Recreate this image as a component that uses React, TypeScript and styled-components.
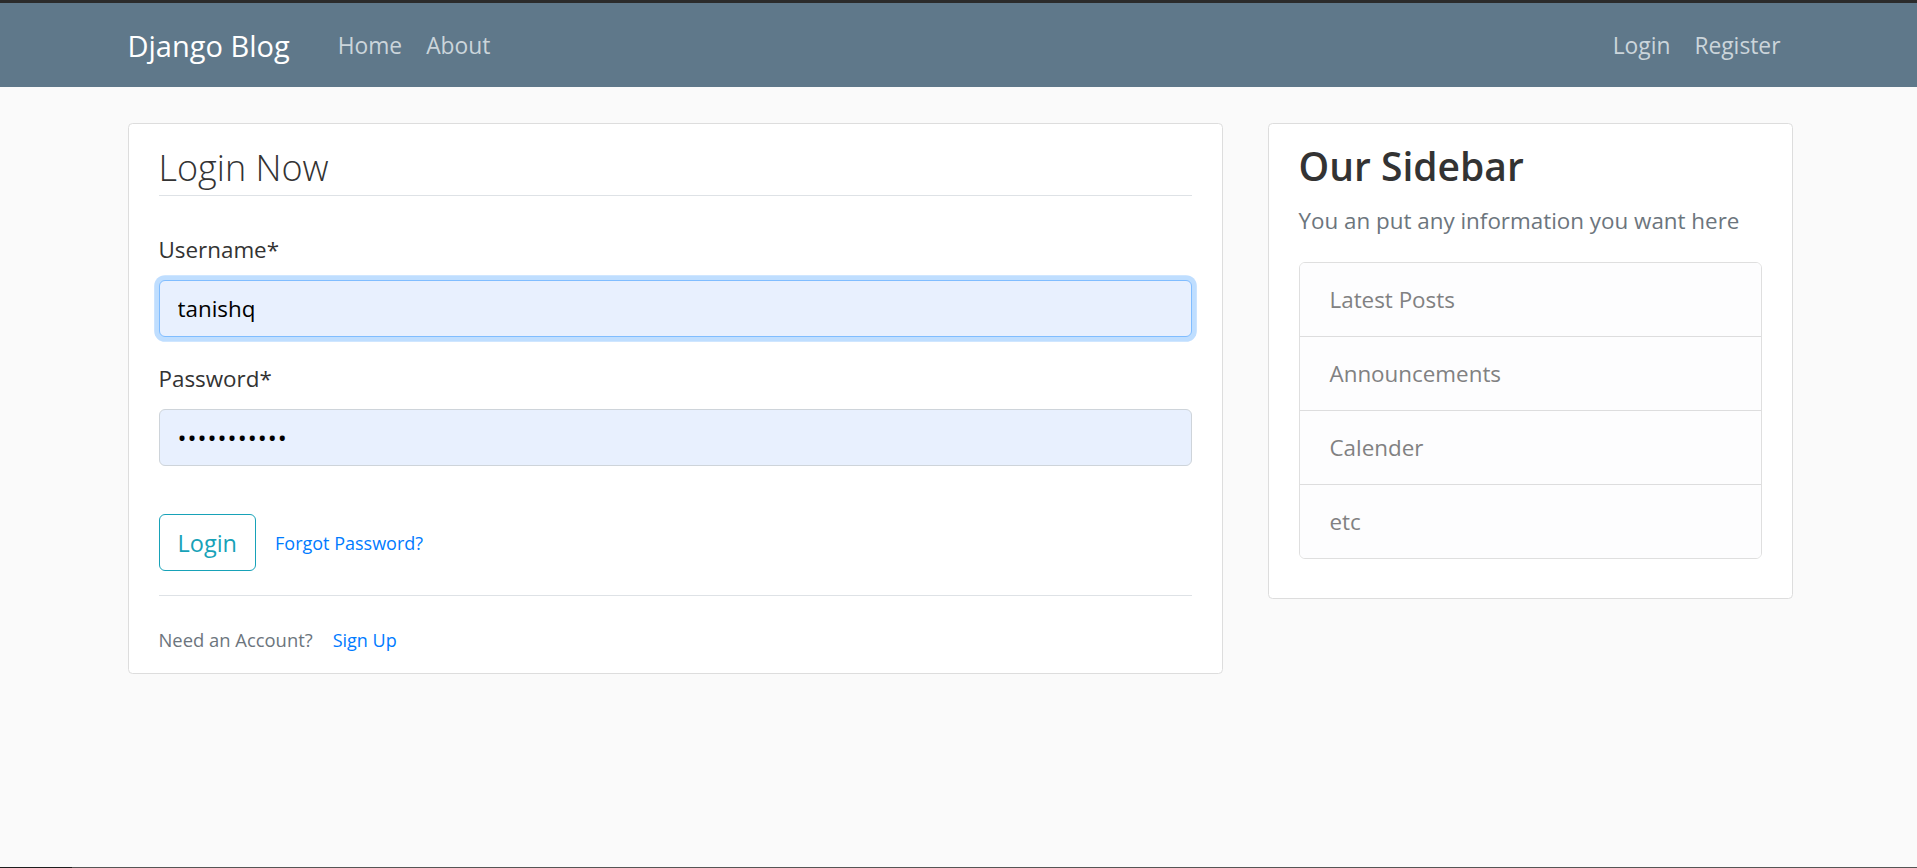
import React from "react";
import styled, { createGlobalStyle, css } from "styled-components";

const GlobalStyle = createGlobalStyle`
  * { box-sizing: border-box; }
  html, body { margin: 0; padding: 0; }
  body {
    background: #fafafa;
    color: #333333;
    font-family: "Open Sans", "Noto Sans", "Liberation Sans", sans-serif;
    font-size: 22.4px;
    line-height: 36px;
  }
`;

const Page = styled.div`
  min-height: 868px;
  display: flex;
  flex-direction: column;
`;

const TopEdge = styled.div`
  height: 3px;
  background: #2b2b2b;
`;

const BottomEdge = styled.div`
  height: 1px;
  margin-top: auto;
  background: linear-gradient(to right, #1e1e1e 0 72px, #555555 72px);
`;

const Header = styled.header`
  background: #5f788a;
  height: 84px;
  display: flex;
  align-items: center;
`;

const Container = styled.div`
  width: 1710px;
  max-width: 100%;
  margin: 0 auto;
  padding: 0 21px 0 24px;
`;

const NavInner = styled(Container)`
  display: flex;
  align-items: center;
`;

const Brand = styled.a`
  color: #ffffff;
  font-size: 29px;
  line-height: 45px;
  margin-right: 36px;
  text-decoration: none;
  white-space: nowrap;
`;

const NavList = styled.nav<{ $right?: boolean }>`
  display: flex;
  ${(p) =>
    p.$right &&
    css`
      margin-left: auto;
    `}
`;

const NavLink = styled.a`
  color: #cbd5db;
  padding: 13px 12px 11px;
  font-size: 22.8px;
  line-height: 36px;
  text-decoration: none;
  &:hover { color: #ffffff; }
`;

const Main = styled(Container)`
  padding-top: 36px;
`;

const Row = styled.div`
  display: grid;
  grid-template-columns: 1095fr 525fr;
  column-gap: 45px;
  align-items: start;
`;

const Section = styled.section`
  background: #ffffff;
  border: 1.5px solid #dddddd;
  border-radius: 4.5px;
  padding: 15px 30px;
`;

const Fieldset = styled.div`
  display: flow-root;
  margin-bottom: 24px;
`;

const Legend = styled.div`
  font-size: 36px;
  font-weight: 300;
  line-height: 54px;
  padding-top: 2px;
  margin-bottom: 36px;
  border-bottom: 1.5px solid #dee2e6;
`;

const Field = styled.div`
  margin-bottom: 24px;
`;

const Label = styled.label`
  display: block;
  margin-bottom: 12px;
`;

const Input = styled.input<{ $focused?: boolean; $secret?: boolean }>`
  display: block;
  width: 100%;
  height: 57px;
  padding: 9px 18px;
  font: inherit;
  font-size: 22.4px;
  color: #000000;
  background: #e8f0fe;
  border: 1.5px solid #ced4da;
  border-radius: 6px;
  outline: none;
  ${(p) =>
    p.$secret &&
    css`
      font-size: 24px;
      letter-spacing: 1px;
    `}
  ${(p) =>
    p.$focused &&
    css`
      border-color: #80bdff;
      box-shadow: 0 0 0 4.8px rgba(0, 123, 255, 0.25);
    `}
`;

const Actions = styled.div`
  display: flex;
  align-items: center;
  margin-bottom: 24px;
`;

const OutlineButton = styled.button`
  height: 57px;
  padding: 9px 18px;
  font: inherit;
  font-size: 23.5px;
  line-height: 36px;
  color: #17a2b8;
  background: transparent;
  border: 1.5px solid #17a2b8;
  border-radius: 6px;
  cursor: pointer;
`;

const SmallLink = styled.a<{ $gap: number }>`
  color: #007bff;
  font-size: 18px;
  text-decoration: none;
  margin-left: ${(p) => p.$gap}px;
`;

const Footer = styled.div`
  border-top: 1.5px solid #dee2e6;
  padding-top: 25px;
  padding-bottom: 0;
  line-height: 36px;
`;

const Muted = styled.small`
  color: #6c757d;
  font-size: 18.4px;
`;

const SideTitle = styled.h3`
  margin: 0 0 12px;
  padding-top: 2px;
  font-size: 39px;
  font-weight: 600;
  line-height: 50.4px;
  color: #333333;
`;

const SideText = styled.p`
  margin: 0 0 23px;
  color: #6c757d;
  white-space: nowrap;
`;

const ListGroup = styled.ul`
  list-style: none;
  margin: 0 0 24px;
  padding: 0;
  border: 1.5px solid rgba(0, 0, 0, 0.125);
  border-radius: 6px;
  overflow: hidden;
`;

const ListItem = styled.li`
  padding: 19px 30px 18px;
  background: #fdfdfe;
  color: #818182;
  & + & { border-top: 1.5px solid rgba(0, 0, 0, 0.125); }
`;

const sidebarItems = ["Latest Posts", "Announcements", "Calender", "etc"];

export default function App() {
  return (
    <Page>
      <GlobalStyle />
      <TopEdge />
      <Header>
        <NavInner>
          <Brand href="#">Django Blog</Brand>
          <NavList>
            <NavLink href="#">Home</NavLink>
            <NavLink href="#">About</NavLink>
          </NavList>
          <NavList $right>
            <NavLink href="#">Login</NavLink>
            <NavLink href="#">Register</NavLink>
          </NavList>
        </NavInner>
      </Header>

      <Main>
        <Row>
          <Section>
            <form onSubmit={(e) => e.preventDefault()}>
              <Fieldset>
                <Legend>Login Now</Legend>
                <Field>
                  <Label htmlFor="id_username">Username*</Label>
                  <Input id="id_username" type="text" defaultValue="tanishq" $focused />
                </Field>
                <Field>
                  <Label htmlFor="id_password">Password*</Label>
                  <Input id="id_password" type="password" defaultValue="tanishq1234" $secret />
                </Field>
              </Fieldset>
              <Actions>
                <OutlineButton type="submit">Login</OutlineButton>
                <SmallLink href="#" $gap={19}>Forgot Password?</SmallLink>
              </Actions>
            </form>
            <Footer>
              <Muted>Need an Account?</Muted>
              <SmallLink href="#" $gap={20}>Sign Up</SmallLink>
            </Footer>
          </Section>

          <Section>
            <SideTitle>Our Sidebar</SideTitle>
            <SideText>You an put any information you want here</SideText>
            <ListGroup>
              {sidebarItems.map((item) => (
                <ListItem key={item}>{item}</ListItem>
              ))}
            </ListGroup>
          </Section>
        </Row>
      </Main>
      <BottomEdge />
    </Page>
  );
}
